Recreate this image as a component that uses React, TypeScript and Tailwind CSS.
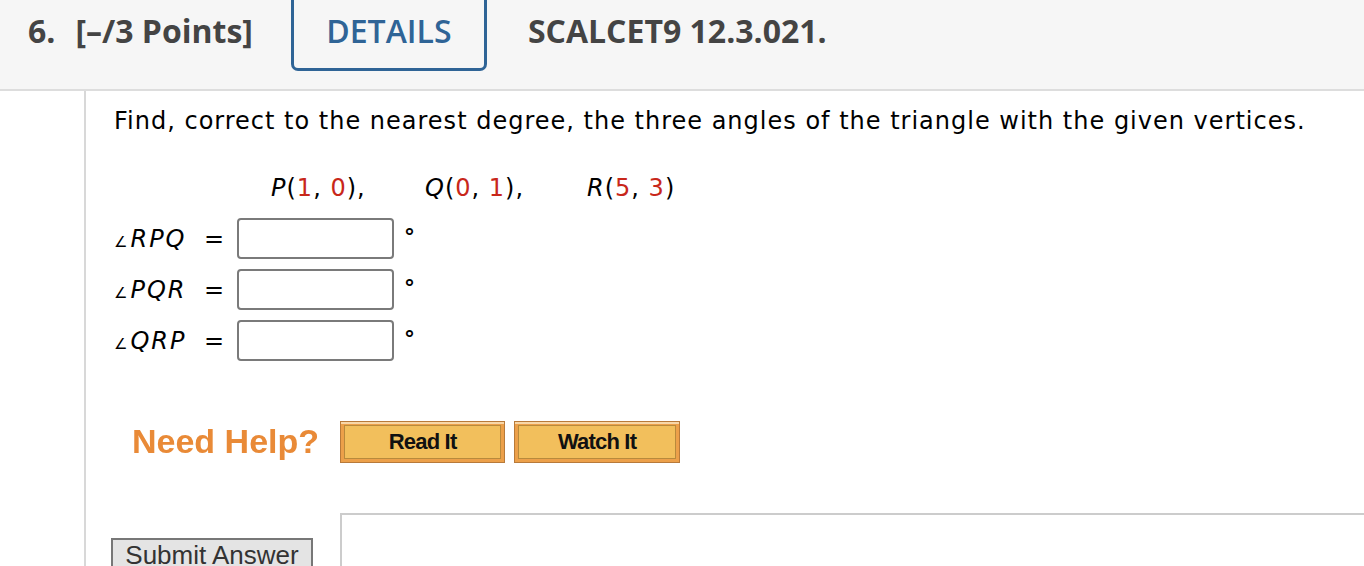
import React from 'react';

const verdana = { fontFamily: '"DejaVu Sans", Verdana, sans-serif' };

const rows = [
  { name: 'RPQ' },
  { name: 'PQR' },
  { name: 'QRP' },
];

const HelpButton = ({ label, width }: { label: string; width: string }) => (
  <button
    className={`h-[42px] ${width} border border-[#b87a3a] bg-[#eca04a] p-[3px] shadow-[inset_0_2px_0_#f8d7a8]`}
  >
    <span className="flex h-full w-full items-center justify-center border border-[#b98a3c] bg-[#f2bf5c] text-[22px] font-bold tracking-[-0.8px] text-[#111]">
      {label}
    </span>
  </button>
);

export default function App() {
  return (
    <div className="h-[566px] w-[1364px] overflow-hidden bg-white" style={verdana}>
      <header
        className="flex h-[91px] items-start border-b-2 border-[#dddddd] bg-[#f6f6f6] text-[#444]"
        style={{ fontFamily: '"Open Sans", sans-serif' }}
      >
        <div className="flex h-[62px] items-center pl-[28px] text-[32px] font-bold">
          <span>6.</span>
          <span className="ml-[20px]">[–/3 Points]</span>
        </div>
        <div className="ml-[38px] flex h-[71px] w-[196px] items-center justify-center rounded-b-[7px] border-x-[3px] border-b-[3px] border-[#2f6496] pb-[6px] text-[32px] font-semibold text-[#2f6496]">
          DETAILS
        </div>
        <div className="ml-[41px] flex h-[62px] items-center text-[32px] font-bold">
          SCALCET9 12.3.021.
        </div>
      </header>

      <div className="flex">
        <div className="h-[480px] w-[86px] shrink-0 border-r-2 border-[#d8d8d8]" />
        <main className="flex-1 pl-[28px] pt-[14px] text-black">
          <p className="text-[24px] leading-[32px] tracking-[1px]">
            Find, correct to the nearest degree, the three angles of the triangle with the given vertices.
          </p>

          <div className="mt-[35px] flex pl-[157px] text-[24px] leading-[32px] tracking-[1px]">
            <span className="w-[154px]">
              <i>P</i>(<span className="text-[#c8271a]">1</span>, <span className="text-[#c8271a]">0</span>),
            </span>
            <span className="w-[162px]">
              <i>Q</i>(<span className="text-[#c8271a]">0</span>, <span className="text-[#c8271a]">1</span>),
            </span>
            <span>
              <i>R</i>(<span className="text-[#c8271a]">5</span>, <span className="text-[#c8271a]">3</span>)
            </span>
          </div>

          <div className="mt-[14px] flex flex-col gap-[10px]">
            {rows.map((r) => (
              <div key={r.name} className="flex h-[41px] items-center text-[24px] tracking-[1px]">
                <span className="w-[90px] shrink-0">
                  <span className="mr-[2px] text-[15px]">∠</span>
                  <i className="tracking-[2px]">{r.name}</i>
                </span>
                <span className="w-[33px] shrink-0">=</span>
                <input
                  type="text"
                  className="h-[41px] w-[157px] rounded-[4px] border-2 border-[#7a7a7a] bg-white"
                />
                <span className="ml-[10px] -mt-[5px] text-[22px] font-bold">°</span>
              </div>
            ))}
          </div>

          <div
            className="mt-[55px] flex items-center"
            style={{ fontFamily: '"Liberation Sans", Arial, sans-serif' }}
          >
            <span className="ml-[18px] mr-[21px] text-[34px] font-bold text-[#e98a37] blur-[0.4px]">
              Need Help?
            </span>
            <HelpButton label="Read It" width="w-[165px]" />
            <span className="w-[9px]" />
            <HelpButton label="Watch It" width="w-[166px]" />
          </div>

          <div
            className="mt-[46px] flex items-start"
            style={{ fontFamily: '"Liberation Sans", Arial, sans-serif' }}
          >
            <button className="-ml-[3px] mt-[25px] flex h-[40px] w-[202px] items-start justify-center border-2 border-[#777] bg-[#e4e4e4] text-[26px] leading-[30px] text-[#333]">
              Submit Answer
            </button>
            <div className="ml-[27px] h-[80px] flex-1 border-l-2 border-t-2 border-[#cccccc]" />
          </div>
        </main>
      </div>
    </div>
  );
}
